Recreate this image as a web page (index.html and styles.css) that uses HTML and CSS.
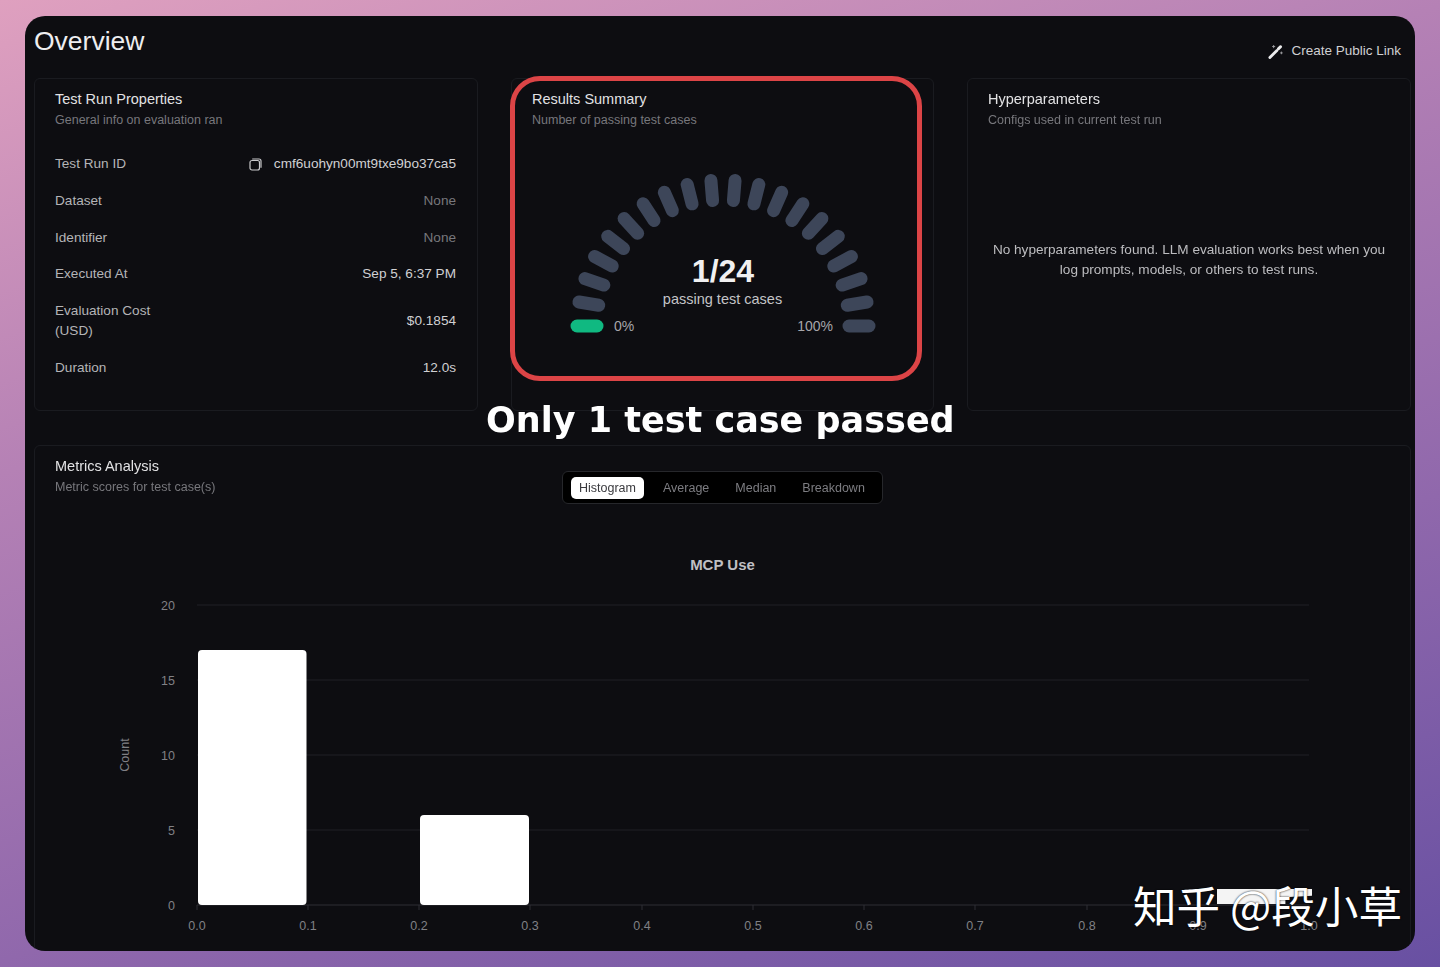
FILE: index.html
```html
<!DOCTYPE html>
<html lang="en">
<head>
<meta charset="utf-8">
<title>Overview</title>
<link rel="stylesheet" href="styles.css">
</head>
<body>
<main class="panel">
  <header class="top">
    <h1 class="page-title">Overview</h1>
    <a class="public-link">
      <svg class="wand" viewBox="0 0 16 16" width="15" height="15" fill="none" stroke="#ececee" stroke-linecap="round">
        <path d="M2 14.500 L9.500 7" stroke-width="3"/>
        <path d="M11 5.200 L13.500 2.800" stroke-width="3"/>
        <path d="M6 1.500v2.500M4.800 2.700h2.400M14.300 8.500v2M13.300 9.500h2" stroke-width="0.900" stroke="#a8a8ac"/>
      </svg>
      Create Public Link
    </a>
  </header>

  <section class="cards">
    <article class="card">
      <h2 class="card-title">Test Run Properties</h2>
      <p class="card-sub">General info on evaluation ran</p>
      <dl class="props">
        <div class="prop"><dt>Test Run ID</dt><dd class="with-icon">
          <svg viewBox="0 0 13 13" width="13" height="13" fill="none" stroke="#c9c9cc" stroke-width="1.200"><rect x="1" y="2.500" width="9.500" height="9.500" rx="2"/><path d="M3.200 1h6.800a2 2 0 0 1 2 2v6.800"/></svg>
          cmf6uohyn00mt9txe9bo37ca5</dd></div>
        <div class="prop"><dt>Dataset</dt><dd class="muted">None</dd></div>
        <div class="prop"><dt>Identifier</dt><dd class="muted">None</dd></div>
        <div class="prop"><dt>Executed At</dt><dd>Sep 5, 6:37 PM</dd></div>
        <div class="prop"><dt class="narrow">Evaluation Cost (USD)</dt><dd>$0.1854</dd></div>
        <div class="prop"><dt>Duration</dt><dd>12.0s</dd></div>
      </dl>
    </article>

    <article class="card">
      <h2 class="card-title">Results Summary</h2>
      <p class="card-sub">Number of passing test cases</p>
      <svg class="gauge" viewBox="0 0 320 176" width="320" height="176" stroke-linecap="round" stroke-width="13" stroke="#3d4659">
        <g>
          <line x1="34" y1="161" x2="14" y2="161" stroke="#10b981"/>
          <line x1="34" y1="161" x2="14" y2="161" transform="rotate(9.470 160 161)"/>
          <line x1="34" y1="161" x2="14" y2="161" transform="rotate(18.950 160 161)"/>
          <line x1="34" y1="161" x2="14" y2="161" transform="rotate(28.420 160 161)"/>
          <line x1="34" y1="161" x2="14" y2="161" transform="rotate(37.890 160 161)"/>
          <line x1="34" y1="161" x2="14" y2="161" transform="rotate(47.370 160 161)"/>
          <line x1="34" y1="161" x2="14" y2="161" transform="rotate(56.840 160 161)"/>
          <line x1="34" y1="161" x2="14" y2="161" transform="rotate(66.320 160 161)"/>
          <line x1="34" y1="161" x2="14" y2="161" transform="rotate(75.790 160 161)"/>
          <line x1="34" y1="161" x2="14" y2="161" transform="rotate(85.260 160 161)"/>
          <line x1="34" y1="161" x2="14" y2="161" transform="rotate(94.740 160 161)"/>
          <line x1="34" y1="161" x2="14" y2="161" transform="rotate(104.210 160 161)"/>
          <line x1="34" y1="161" x2="14" y2="161" transform="rotate(113.680 160 161)"/>
          <line x1="34" y1="161" x2="14" y2="161" transform="rotate(123.160 160 161)"/>
          <line x1="34" y1="161" x2="14" y2="161" transform="rotate(132.630 160 161)"/>
          <line x1="34" y1="161" x2="14" y2="161" transform="rotate(142.110 160 161)"/>
          <line x1="34" y1="161" x2="14" y2="161" transform="rotate(151.580 160 161)"/>
          <line x1="34" y1="161" x2="14" y2="161" transform="rotate(161.050 160 161)"/>
          <line x1="34" y1="161" x2="14" y2="161" transform="rotate(170.530 160 161)"/>
          <line x1="34" y1="161" x2="14" y2="161" transform="rotate(180 160 161)"/>
        </g>
        <text class="gauge-value" x="160" y="117" text-anchor="middle">1/24</text>
        <text class="gauge-label" x="159.500" y="139" text-anchor="middle">passing test cases</text>
        <text class="gauge-end" x="51" y="166">0%</text>
        <text class="gauge-end" x="270" y="166" text-anchor="end">100%</text>
      </svg>
    </article>

    <article class="card">
      <h2 class="card-title">Hyperparameters</h2>
      <p class="card-sub">Configs used in current test run</p>
      <p class="empty">No hyperparameters found. LLM evaluation works best when you log prompts, models, or others to test runs.</p>
    </article>
  </section>

  <section class="card metrics">
    <div class="metrics-head">
      <div>
        <h2 class="card-title">Metrics Analysis</h2>
        <p class="card-sub">Metric scores for test case(s)</p>
      </div>
      <div class="tabs">
        <span class="tab active">Histogram</span>
        <span class="tab">Average</span>
        <span class="tab">Median</span>
        <span class="tab">Breakdown</span>
      </div>
    </div>
    <svg class="chart" viewBox="0 0 1375 441" width="1375" height="441">
      <text class="chart-title" x="687.500" y="60" text-anchor="middle">MCP Use</text>
      <g class="grid">
        <line x1="162" y1="95" x2="1274" y2="95"/>
        <line x1="162" y1="170" x2="1274" y2="170"/>
        <line x1="162" y1="245" x2="1274" y2="245"/>
        <line x1="162" y1="320" x2="1274" y2="320"/>
        <line class="axis" x1="162" y1="395" x2="1274" y2="395"/>
      </g>
      <g class="axis-ticks">
        <line x1="162" y1="395" x2="162" y2="400"/><line x1="273" y1="395" x2="273" y2="400"/>
        <line x1="384" y1="395" x2="384" y2="400"/><line x1="495" y1="395" x2="495" y2="400"/>
        <line x1="607" y1="395" x2="607" y2="400"/><line x1="718" y1="395" x2="718" y2="400"/>
        <line x1="829" y1="395" x2="829" y2="400"/><line x1="940" y1="395" x2="940" y2="400"/>
        <line x1="1052" y1="395" x2="1052" y2="400"/><line x1="1163" y1="395" x2="1163" y2="400"/>
        <line x1="1274" y1="395" x2="1274" y2="400"/>
      </g>
      <rect class="bar" x="163" y="140" width="108.500" height="255" rx="4"/>
      <rect class="bar" x="385" y="305" width="109" height="90" rx="4"/>
      <g class="ticks" text-anchor="end">
        <text x="140" y="99.500">20</text>
        <text x="140" y="174.500">15</text>
        <text x="140" y="249.500">10</text>
        <text x="140" y="324.500">5</text>
        <text x="140" y="399.500">0</text>
      </g>
      <g class="ticks" text-anchor="middle">
        <text x="162" y="419.500">0.0</text><text x="273" y="419.500">0.1</text>
        <text x="384" y="419.500">0.2</text><text x="495" y="419.500">0.3</text>
        <text x="607" y="419.500">0.4</text><text x="718" y="419.500">0.5</text>
        <text x="829" y="419.500">0.6</text><text x="940" y="419.500">0.7</text>
        <text x="1052" y="419.500">0.8</text><text x="1163" y="419.500">0.9</text>
        <text x="1274" y="419.500">1.0</text>
      </g>
      <text class="ticks" transform="translate(94 245) rotate(-90)" text-anchor="middle">Count</text>
    </svg>
  </section>

  <div class="mark-box"></div>
  <p class="mark-text">Only 1 test case passed</p>
  <div class="smear"></div>
  <p class="watermark">知乎 @段小草</p>
</main>
</body>
</html>
```
FILE: styles.css
```css
* { box-sizing: border-box; }
html, body { height: 100%; }
body {
  margin: 0;
  height: 967px;
  overflow: hidden;
  padding: 16px 25px;
  background: linear-gradient(162deg, #dfa0bf 0%, #b581b5 33%, #9068ac 67%, #6850a2 100%);
  font-family: "Liberation Sans", Arial, sans-serif;
  color: #e6e6e8;
}
.panel {
  position: relative;
  width: 1390px;
  height: 935px;
  padding: 0 4px 0 9px;
  background: #0d0d11;
  border-radius: 20px;
  overflow: hidden;
  filter: blur(0.35px);
}
.top {
  height: 62px;
  display: flex;
  justify-content: space-between;
  align-items: flex-start;
}
.page-title {
  margin: 9px 0 0;
  font-size: 26.500px;
  line-height: 32px;
  font-weight: 400;
  color: #eeeef0;
}
.public-link {
  margin: 26px 10px 0 0;
  display: flex;
  align-items: center;
  gap: 8px;
  font-size: 13.500px;
  line-height: 18px;
  color: #d0d0d3;
}
.cards {
  display: grid;
  grid-template-columns: 444px 423px 444px;
  gap: 33px;
}
.card {
  height: 333px;
  padding: 10px 20px;
  border: 1px solid #1a1b20;
  border-radius: 6px;
}
.card-title {
  margin: 0;
  font-size: 14.500px;
  line-height: 20px;
  font-weight: 400;
  color: #e2e2e4;
}
.card-sub {
  margin: 0;
  padding-top: 1px;
  font-size: 12.500px;
  line-height: 20px;
  color: #77777c;
}
.props { margin: 16px 1px 0 0; }
.prop {
  display: flex;
  justify-content: space-between;
  align-items: center;
  padding: 8.350px 0;
  font-size: 13.600px;
  line-height: 20px;
}
.prop dt { color: #b4b4b7; }
.prop dd { margin: 0; color: #d0d0d3; }
.prop dt.narrow { width: 120px; }
.prop dd.muted { color: #77777c; }
.with-icon { display: flex; align-items: center; gap: 12px; }
.gauge { display: block; margin: 35px auto 0; }
.gauge-value { font-size: 32px; font-weight: 700; fill: #f0f0f1; stroke: none; }
.gauge-label { font-size: 14.500px; fill: #c4c4c7; stroke: none; }
.gauge-end { font-size: 14px; fill: #a6a6aa; stroke: none; }
.empty {
  margin: 110px 0 0;
  font-size: 13.600px;
  line-height: 20px;
  text-align: center;
  color: #bdbdc0;
}
.metrics {
  height: 520px;
  margin-top: 34px;
  padding: 0;
}
.metrics-head {
  display: grid;
  grid-template-columns: 1fr auto 1fr;
  align-items: start;
  padding: 10px 20px 0;
  height: 64px;
}
.tabs {
  margin-top: 15px;
  width: 321px;
  height: 33px;
  display: flex;
  align-items: center;
  padding-left: 8px;
  background: #000;
  border: 1px solid #26272b;
  border-radius: 6px;
  font-size: 12.500px;
  color: #7d7d82;
}
.tab { padding: 0 8px; line-height: 22px; margin-right: 10px; }
.tab.active {
  background: #fff;
  color: #3a3a3e;
  border-radius: 5px;
  margin-right: 11px;
}
.chart { display: block; }
.chart-title { font-size: 15px; font-weight: 700; fill: #bfbfc3; }
.grid line { stroke: #202126; stroke-width: 1; }
.grid line.axis { stroke: #2e2f34; }
.axis-ticks line { stroke: #2e2f34; }
.bar { fill: #fff; }
.ticks { font-size: 12.500px; fill: #808085; }
.mark-box {
  position: absolute;
  left: 485px;
  top: 60px;
  width: 412px;
  height: 305px;
  border: 5px solid #dc4446;
  border-radius: 30px;
}
.mark-text {
  position: absolute;
  left: 461px;
  top: 381px;
  margin: 0;
  width: 468px;
  white-space: nowrap;
  font-family: "DejaVu Sans", sans-serif;
  font-weight: 700;
  font-size: 35px;
  line-height: 46px;
  color: #fff;
}
.smear {
  position: absolute;
  left: 1192px;
  top: 873px;
  width: 95px;
  height: 15px;
  background: #f4f4f4;
  clip-path: polygon(0 0, 100% 0, 100% 45%, 72% 55%, 72% 100%, 0 100%);
}
.watermark {
  position: absolute;
  left: 1108px;
  top: 858px;
  margin: 0;
  white-space: nowrap;
  font-family: "Noto Sans CJK SC", sans-serif;
  font-weight: 400;
  font-size: 43.600px;
  line-height: 60px;
  color: #fff;
  text-shadow: 0 0 2px #000;
}
```
